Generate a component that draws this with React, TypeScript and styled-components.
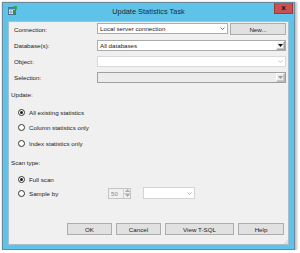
import React from "react";
import styled, { createGlobalStyle } from "styled-components";

const Global = createGlobalStyle`
  html, body { margin: 0; padding: 0; background: #ffffff; }
  body { font-family: "Liberation Sans", Arial, sans-serif; }
  * { box-sizing: border-box; }
`;

const Window = styled.div`
  margin: 2px 0 0 2px;
  width: 293px;
  height: 248px;
  background: #5fc3e9;
  border: 1px solid #6a8a9c;
  box-shadow: 1px 1px 2px 1px rgba(0, 0, 0, 0.25);
  display: flex;
  flex-direction: column;
  padding: 0 5px 4px 5px;
`;

const TitleBar = styled.div`
  height: 18px;
  position: relative;
  display: flex;
  align-items: center;
  justify-content: center;
`;

const TitleIcon = styled.svg`
  position: absolute;
  left: 0;
  top: 3px;
`;

const Title = styled.div`
  font-size: 7.4px;
  color: #1b2a33;
  margin-top: -1px;
`;

const CloseButton = styled.div`
  position: absolute;
  right: -4px;
  top: 0;
  width: 19px;
  height: 11px;
  background: #c75050;
  border: 1px solid #9a3a3a;
  border-top: none;
  display: flex;
  align-items: center;
  justify-content: center;
  font-size: 7px;
  font-weight: 700;
  color: #1a1a1a;
  font-family: "DejaVu Sans", sans-serif;
`;

const ContentWrap = styled.div`
  flex: 1;
  display: flex;
  position: relative;
`;

const Content = styled.div`
  flex: 1;
  background: #f0f0f0;
  border: 1px solid #a8c0cc;
  display: flex;
  flex-direction: column;
  padding: 1px 2px 0 2px;
  font-size: 6.2px;
  color: #1a1a1a;
`;

const FormGrid = styled.div`
  display: grid;
  grid-template-columns: 83px 1fr;
  row-gap: 5px;
  padding-left: 3px;
  align-items: center;
`;

const Label = styled.div`
  line-height: 11px;
`;

const RowInline = styled.div`
  display: flex;
  gap: 2px;
`;

const Field = styled.div<{ $disabled?: boolean; $gray?: boolean }>`
  height: 11px;
  flex: 1;
  background: ${(p) => (p.$gray ? "#ececec" : "#ffffff")};
  border: 1px solid ${(p) => (p.$gray ? "#a0a0a0" : p.$disabled ? "#d9d9d9" : "#acacac")};
  display: flex;
  align-items: center;
  padding-left: 2px;
  line-height: 9px;
`;

const FieldText = styled.span`
  flex: 1;
`;

const Chevron = styled.svg`
  margin-right: 2px;
`;

const DropButton = styled.div<{ $disabled?: boolean }>`
  width: 9px;
  height: 9px;
  background: ${(p) => (p.$disabled ? "#ececec" : "#f3f3f3")};
  border: 1px solid ${(p) => (p.$disabled ? "#b8b8b8" : "#a0a0a0")};
  border-top-color: #ffffff;
  border-left-color: #ffffff;
  box-shadow: inset -1px -1px 0 #c8c8c8;
  display: flex;
  align-items: center;
  justify-content: center;
`;

const Button = styled.div<{ $w: number }>`
  width: ${(p) => p.$w}px;
  height: 12px;
  background: #e1e1e1;
  border: 1px solid #adadad;
  display: flex;
  align-items: center;
  justify-content: center;
  font-size: 6.2px;
  color: #1a1a1a;
`;

const SectionLabel = styled.div<{ $top: number }>`
  margin-top: ${(p) => p.$top}px;
  line-height: 8px;
`;

const RadioList = styled.div<{ $top: number; $gap: number }>`
  display: flex;
  flex-direction: column;
  gap: ${(p) => p.$gap}px;
  margin-top: ${(p) => p.$top}px;
  padding-left: 7px;
`;

const RadioRow = styled.div`
  display: flex;
  align-items: center;
  height: 8px;
`;

const RadioCircle = styled.div<{ $on?: boolean }>`
  width: 7px;
  height: 7px;
  border-radius: 50%;
  border: 1px solid #333;
  background: #fff;
  display: flex;
  align-items: center;
  justify-content: center;
  margin-right: 4px;
  &::after {
    content: "";
    display: ${(p) => (p.$on ? "block" : "none")};
    width: 3px;
    height: 3px;
    border-radius: 50%;
    background: #1a1a1a;
  }
`;

const RadioText = styled.span`
  width: 79px;
`;

const SpinBox = styled.div`
  width: 23px;
  height: 11px;
  border: 1px solid #c4c4c4;
  background: #f0f0f0;
  display: flex;
  color: #8a8a8a;
`;

const SpinValue = styled.div`
  flex: 1;
  padding-left: 2px;
  line-height: 9px;
`;

const SpinArrows = styled.div`
  width: 7px;
  display: flex;
  flex-direction: column;
  border-left: 1px solid #d0d0d0;
`;

const SpinArrow = styled.div`
  flex: 1;
  display: flex;
  align-items: center;
  justify-content: center;
  & + & { border-top: 1px solid #d0d0d0; }
`;

const SmallCombo = styled.div`
  width: 52px;
  height: 12px;
  margin-left: 12px;
  background: #fff;
  border: 1px solid #d4d4d4;
  display: flex;
  align-items: center;
  justify-content: flex-end;
`;

const ButtonBar = styled.div`
  margin-top: auto;
  margin-bottom: 9px;
  display: flex;
  justify-content: flex-end;
  gap: 4px;
  padding-right: 2px;
`;

const Grip = styled.svg`
  position: absolute;
  right: 1px;
  bottom: 1px;
`;

const ChevronIcon = ({ color }: { color: string }) => (
  <Chevron width="5" height="3" viewBox="0 0 5 3">
    <path d="M0.5 0.5 L2.5 2.5 L4.5 0.5" fill="none" stroke={color} strokeWidth="0.8" />
  </Chevron>
);

const Tri = ({ color, up }: { color: string; up?: boolean }) => (
  <svg width="5" height="3" viewBox="0 0 5 3">
    <path d={up ? "M0 3 L5 3 L2.5 0 Z" : "M0 0 L5 0 L2.5 3 Z"} fill={color} />
  </svg>
);

export default function App() {
  return (
    <>
      <Global />
      <Window>
        <TitleBar>
          <TitleIcon width="9" height="9" viewBox="0 0 9 9">
            <rect x="0.5" y="1.5" width="7" height="7" fill="#e8f0f6" stroke="#4a6f8f" strokeWidth="1" />
            <rect x="0.5" y="1.5" width="7" height="2" fill="#4a7fb0" />
            <line x1="3" y1="3.5" x2="3" y2="8.5" stroke="#6b8fab" strokeWidth="0.8" />
            <line x1="0.5" y1="6" x2="7.5" y2="6" stroke="#6b8fab" strokeWidth="0.8" />
            <path d="M5 0 L9 0 L9 4 Z" fill="#3aa848" />
            <rect x="5" y="4" width="3" height="4" fill="#2f9a3c" />
          </TitleIcon>
          <Title>Update Statistics Task</Title>
          <CloseButton>x</CloseButton>
        </TitleBar>
        <ContentWrap>
          <Content>
            <FormGrid>
              <Label>Connection:</Label>
              <RowInline>
                <Field>
                  <FieldText>Local server connection</FieldText>
                  <ChevronIcon color="#555" />
                </Field>
                <Button $w={56}>New...</Button>
              </RowInline>
              <Label>Database(s):</Label>
              <RowInline>
                <Field>
                  <FieldText>All databases</FieldText>
                  <DropButton>
                    <Tri color="#111" />
                  </DropButton>
                </Field>
              </RowInline>
              <Label>Object:</Label>
              <RowInline>
                <Field $disabled>
                  <FieldText></FieldText>
                  <ChevronIcon color="#bbb" />
                </Field>
              </RowInline>
              <Label>Selection:</Label>
              <RowInline>
                <Field $gray>
                  <FieldText></FieldText>
                  <DropButton $disabled>
                    <Tri color="#999" />
                  </DropButton>
                </Field>
              </RowInline>
            </FormGrid>

            <SectionLabel $top={8}>Update:</SectionLabel>
            <RadioList $top={9} $gap={7.5}>
              <RadioRow>
                <RadioCircle $on />
                <span>All existing statistics</span>
              </RadioRow>
              <RadioRow>
                <RadioCircle />
                <span>Column statistics only</span>
              </RadioRow>
              <RadioRow>
                <RadioCircle />
                <span>Index statistics only</span>
              </RadioRow>
            </RadioList>

            <SectionLabel $top={12}>Scan type:</SectionLabel>
            <RadioList $top={8} $gap={6}>
              <RadioRow>
                <RadioCircle $on />
                <span>Full scan</span>
              </RadioRow>
              <RadioRow>
                <RadioCircle />
                <RadioText>Sample by</RadioText>
                <SpinBox>
                  <SpinValue>50</SpinValue>
                  <SpinArrows>
                    <SpinArrow>
                      <Tri color="#aaa" up />
                    </SpinArrow>
                    <SpinArrow>
                      <Tri color="#aaa" />
                    </SpinArrow>
                  </SpinArrows>
                </SpinBox>
                <SmallCombo>
                  <ChevronIcon color="#aaa" />
                </SmallCombo>
              </RadioRow>
            </RadioList>

            <ButtonBar>
              <Button $w={45}>OK</Button>
              <Button $w={45}>Cancel</Button>
              <Button $w={69}>View T-SQL</Button>
              <Button $w={46}>Help</Button>
            </ButtonBar>
          </Content>
          <Grip width="5" height="5" viewBox="0 0 5 5">
            <rect x="3.5" y="3.5" width="1" height="1" fill="#b0b0b0" />
            <rect x="1.5" y="3.5" width="1" height="1" fill="#b0b0b0" />
            <rect x="3.5" y="1.5" width="1" height="1" fill="#b0b0b0" />
          </Grip>
        </ContentWrap>
      </Window>
    </>
  );
}
